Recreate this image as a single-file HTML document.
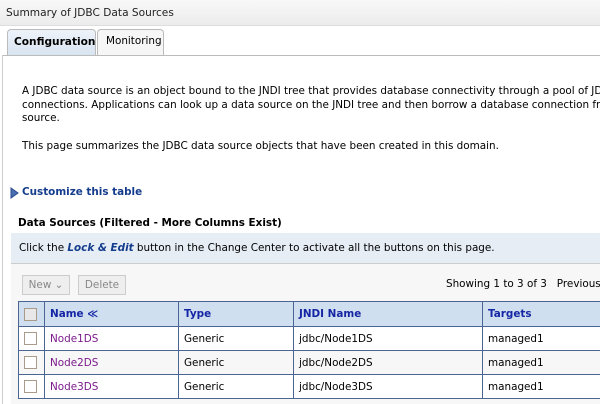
<!DOCTYPE html>
<html><head><style>
body{margin:0;width:600px;height:404px;overflow:hidden;background:#fff;font-family:"DejaVu Sans",sans-serif;font-size:10.4px;color:#000;position:relative}
.a{position:absolute;white-space:nowrap}
.title{left:0;top:0;width:600px;height:25px;background:linear-gradient(#f8f8f8,#ececec);border-bottom:1px solid #ddd}
.tab{top:29px;height:25px;border:1px solid #bbb;border-bottom:none;border-radius:4px 4px 0 0}
table{table-layout:fixed}
td{border:1px solid #4a6592;padding:0 0 0 5px;height:23px;overflow:hidden;white-space:nowrap}
th{border:1px solid #4a6592;background:#cfdff0;color:#1526a4;text-align:left;padding:0 0 0 5px;height:24px;font-weight:bold;white-space:nowrap}
.cb{display:inline-block;width:11px;height:11px;border:1px solid #a89b8b;background:#fff;vertical-align:middle}
.n{color:#7a1a8a}
</style></head><body>
<div class="a title"></div>
<div class="a" style="left:6px;top:7px;font-size:10.6px;color:#222">Summary of JDBC Data Sources</div>
<div class="a tab" style="left:7px;width:87px;background:linear-gradient(#eef3fa,#d9e4f2)"></div>
<div class="a" style="left:14px;top:36px;font-weight:bold;font-size:10.6px">Configuration</div>
<div class="a tab" style="left:97px;width:65px;background:#f6f6f6"></div>
<div class="a" style="left:106px;top:35px">Monitoring</div>
<div class="a" style="left:2px;top:55px;width:598px;height:1px;background:#bbb"></div>
<div class="a" style="left:2px;top:55px;width:1px;height:349px;background:#ccc"></div>
<div class="a" style="left:22px;top:85px;line-height:13.7px">A JDBC data source is an object bound to the JNDI tree that provides database connectivity through a pool of JDBC<br>connections. Applications can look up a data source on the JNDI tree and then borrow a database connection from a data<br>source.</div>
<div class="a" style="left:22px;top:140px">This page summarizes the JDBC data source objects that have been created in this domain.</div>
<svg class="a" style="left:10px;top:187px" width="9" height="12"><path d="M1 1L8 6L1 11Z" fill="#4a6fb0" stroke="#2a4a90"/></svg>
<div class="a" style="left:22px;top:186px;font-weight:bold;color:#143c8c">Customize this table</div>
<div class="a" style="left:18px;top:217px;font-weight:bold">Data Sources (Filtered - More Columns Exist)</div>
<div class="a" style="left:11px;top:233px;width:589px;height:30px;background:#e6edf5;border-bottom:1px solid #ccc"></div>
<div class="a" style="left:19px;top:242px">Click the <b style="color:#143c8c;font-style:italic">Lock &amp; Edit</b> button in the Change Center to activate all the buttons on this page.</div>
<div class="a" style="left:11px;top:264px;width:589px;height:140px;background:#f7f7f7"></div>
<div class="a" style="left:22px;top:275px;width:46px;height:18px;border:1px solid #ccc;background:#eee;color:#888;text-align:center;line-height:18px">New ⌄</div>
<div class="a" style="left:78px;top:275px;width:46px;height:18px;border:1px solid #ccc;background:#eee;color:#888;text-align:center;line-height:18px">Delete</div>
<div class="a" style="left:446px;top:278px">Showing 1 to 3 of 3 &nbsp; Previous &nbsp;|</div>
<table class="a" style="left:18px;top:301px;border-collapse:collapse;width:600px">
<tr><th style="width:20px"><span class="cb" style="background:#e8e8e8"></span></th><th style="width:128px">Name ≪</th><th style="width:109px">Type</th><th style="width:183px">JNDI Name</th><th>Targets</th></tr>
<tr style="background:#fff"><td><span class="cb"></span></td><td class="n">Node1DS</td><td>Generic</td><td>jdbc/Node1DS</td><td>managed1</td></tr>
<tr style="background:#f7f7f7"><td><span class="cb"></span></td><td class="n">Node2DS</td><td>Generic</td><td>jdbc/Node2DS</td><td>managed1</td></tr>
<tr style="background:#fff"><td><span class="cb"></span></td><td class="n">Node3DS</td><td>Generic</td><td>jdbc/Node3DS</td><td>managed1</td></tr>
</table>
</body></html>
